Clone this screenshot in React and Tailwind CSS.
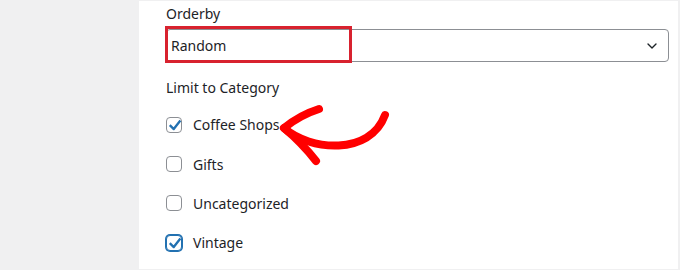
import { ChevronDown } from "lucide-react";

const cats = [
  { name: "Coffee Shops", checked: true },
  { name: "Gifts", checked: false },
  { name: "Uncategorized", checked: false },
  { name: "Vintage", checked: true, focus: true },
];

const Check = () => (
  <svg viewBox="0 0 20 20" className="absolute -left-[3px] -top-[3px] w-[21px] h-[21px]">
    <path d="M5.5 9.6 L9.3 13.4 L15.6 5.2" fill="none" stroke="#2271b1" strokeWidth="2.2" strokeLinejoin="round" />
  </svg>
);

const CheckRow = ({ name, checked, focus }) => (
  <div className="flex items-center h-[39.4px]">
    <span
      className={
        focus
          ? "relative w-4 h-4 rounded-[4px] border border-[#2271b1] shadow-[0_0_0_1px_#2271b1] bg-white"
          : "relative w-4 h-4 rounded-[4px] border border-[#8c8f94] bg-white"
      }
    >
      {checked && <Check />}
    </span>
    <span className="ml-[11px]">{name}</span>
  </div>
);

export default function App() {
  return (
    <div
      className="w-[680px] h-[270px] flex bg-[#f0f0f1] text-[14px] text-[#1d2327] overflow-hidden"
      style={{ fontFamily: '"Noto Sans", sans-serif' }}
    >
      <div className="w-[139px] shrink-0" />
      <div className="relative w-[539px] h-[269px] bg-white border-t border-[#f0f0f1] pl-[27px] pt-[3px]">
        <div className="leading-5">Orderby</div>

        <div className="relative mt-[5px] w-[503px]">
          <div className="h-[33px] rounded-[4px] border border-[#8c8f94] flex items-center justify-between pl-[4px] pr-[8px]">
            <span>Random</span>
            <ChevronDown size={16} strokeWidth={2} className="text-[#1d2327]" />
          </div>
          <div className="absolute -left-[1px] -top-[3px] w-[187px] h-[37px] border-[3px] border-[#d8222f] pointer-events-none" />
        </div>

        <div className="leading-5 mt-[16px]">Limit to Category</div>

        <div className="mt-[7px] flex flex-col">
          {cats.map((c) => (
            <CheckRow key={c.name} {...c} />
          ))}
        </div>

        <svg className="absolute left-0 top-0 pointer-events-none" width="539" height="269" viewBox="139 0 539 269">
          <g fill="none" stroke="#ff0000" strokeWidth="8" strokeLinecap="round" strokeLinejoin="round">
            <path d="M284 127 C310 150, 370 155, 385 114" />
            <path d="M319 108 Q300 114, 284 127 Q302 142, 316 160" />
          </g>
        </svg>
      </div>
    </div>
  );
}
